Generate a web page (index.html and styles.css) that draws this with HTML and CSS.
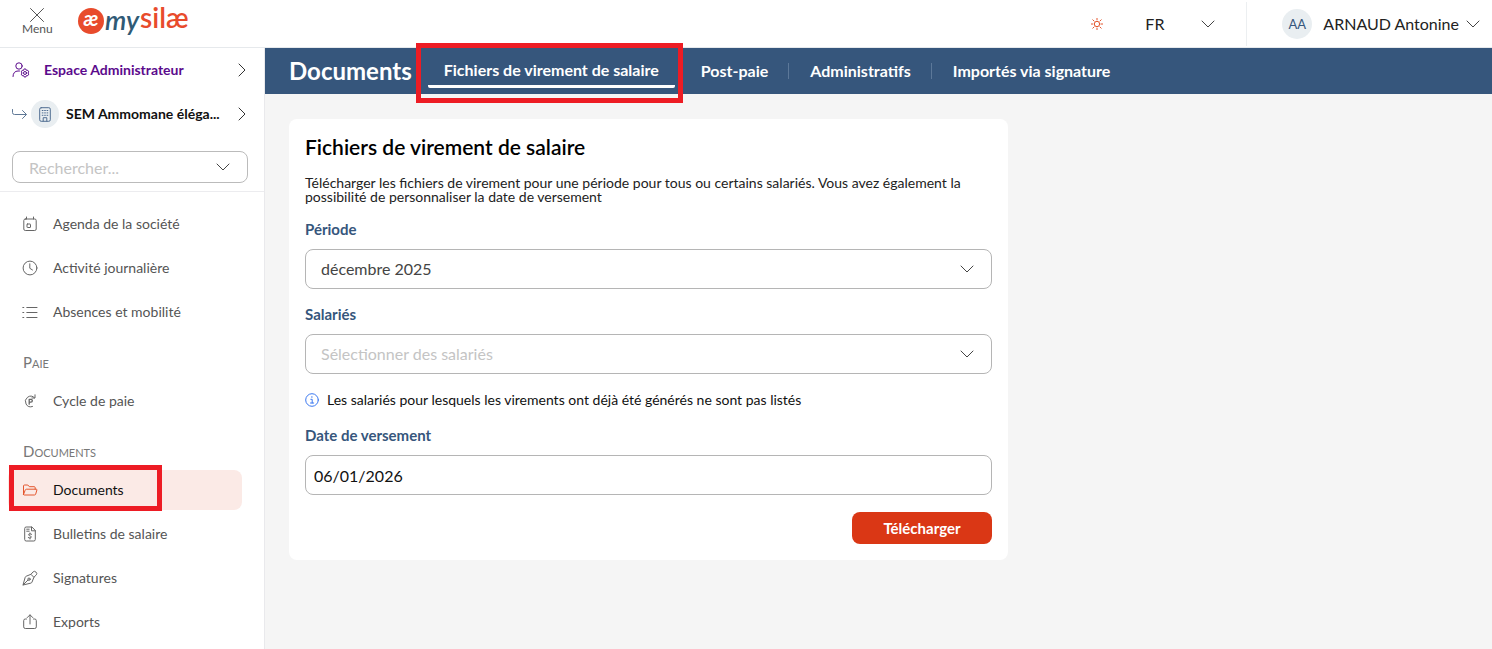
FILE: index.html
```html
<!DOCTYPE html>
<html lang="fr">
<head>
<meta charset="utf-8">
<meta name="viewport" content="width=device-width, initial-scale=1">
<title>Documents - mysilae</title>
<link rel="stylesheet" href="styles.css">
</head>
<body>
<div class="app">
  <header class="topbar">
    <button class="menu-button" type="button">
      <svg class="menu-icon" viewBox="0 0 16 14" aria-hidden="true"><path d="M1.5 .5l13 13M14.500 .5l-13 13"/></svg>
      <span>Menu</span>
    </button>
    <a class="logo" href="#" aria-label="mysilae">
      <svg viewBox="0 0 112 34" aria-hidden="true">
        <circle cx="13" cy="14" r="13" class="logo-disc"/>
        <text x="13" y="19" text-anchor="middle" class="logo-mark">æ</text>
        <text x="27" y="23" class="logo-my">my</text>
        <text x="62" y="21" class="logo-silae">silæ</text>
      </svg>
    </a>
    <div class="top-actions">
      <button class="theme-button" type="button" aria-label="Thème clair">
        <svg viewBox="0 0 12 12" aria-hidden="true"><circle cx="6" cy="6" r="2.700"/><path d="M6 0v1.900M6 10.100V12M0 6h1.900M10.100 6H12M1.800 1.800l1.300 1.300M8.900 8.900l1.300 1.300M10.200 1.800L8.900 3.100M3.100 8.900l-1.300 1.300"/></svg>
      </button>
      <div class="lang">
        <select class="lang-select" aria-label="Langue"><option>FR</option></select>
        <svg class="chevron" viewBox="0 0 14 8" aria-hidden="true"><path d="M1 1l6 6 6-6"/></svg>
      </div>
      <button class="user" type="button">
        <span class="avatar">AA</span>
        <span>ARNAUD Antonine</span>
        <svg class="chevron" viewBox="0 0 14 8" aria-hidden="true"><path d="M1 1l6 6 6-6"/></svg>
      </button>
    </div>
  </header>

  <aside class="sidebar">
    <div class="context">
      <a class="context-row admin" href="#">
        <svg class="admin-icon" viewBox="0 0 18 16" aria-hidden="true"><circle cx="7" cy="4" r="3.200"/><path d="M1 14.500c0-3.500 2-5.500 5-5.500h1.500"/><path d="M13 7l1 .2.500 1.200 1.300-.1.900 1.500-.7 1.200.7 1.200-.9 1.500-1.300-.1-.5 1.200-1 .2-1-.2-.5-1.200-1.300.1-.9-1.500.7-1.200-.7-1.200.9-1.500 1.300.1.500-1.200z"/><circle cx="13" cy="11" r="1.500"/></svg>
        <span class="context-name">Espace Administrateur</span>
        <svg class="chevron-right" viewBox="0 0 8 14" aria-hidden="true"><path d="M1 1l6 6-6 6"/></svg>
      </a>
      <a class="context-row company" href="#">
        <svg class="sub-arrow" viewBox="0 0 15 10" aria-hidden="true"><path d="M.5.5v3q0 2 2 2h11.500M10.500 1.500l4 4-4 4"/></svg>
        <span class="company-badge">
          <svg viewBox="0 0 12 15" aria-hidden="true"><rect x=".7" y=".7" width="10.600" height="13.600" rx="1.500"/><path d="M4.200 14v-3.300h3.600V14"/><path class="dots" d="M3.200 3.500h.8M5.600 3.500h.8M8 3.500h.8M3.200 5.900h.8M5.600 5.900h.8M8 5.900h.8M3.200 8.300h.8M5.600 8.300h.8M8 8.300h.8"/></svg>
        </span>
        <span class="context-name">SEM Ammomane éléga...</span>
        <svg class="chevron-right" viewBox="0 0 8 14" aria-hidden="true"><path d="M1 1l6 6-6 6"/></svg>
      </a>
      <div class="search">
        <input class="search-input" type="text" placeholder="Rechercher..." aria-label="Rechercher">
        <svg class="chevron" viewBox="0 0 14 8" aria-hidden="true"><path d="M1 1l6 6 6-6"/></svg>
      </div>
    </div>
    <nav class="side-nav" aria-label="Navigation principale">
      <a class="nav-item" href="#">
        <svg viewBox="0 0 16 16" aria-hidden="true"><rect x="1.800" y="3" width="12.400" height="11.500" rx="1.500"/><path d="M4.500 1v2M11.500 1v2"/><rect x="5" y="8" width="3.500" height="3.500" rx=".5"/></svg>
        <span>Agenda de la société</span>
      </a>
      <a class="nav-item" href="#">
        <svg viewBox="0 0 16 16" aria-hidden="true"><circle cx="8" cy="8" r="6.900"/><path d="M7.800 3.800v4.500l2.700 1.700"/></svg>
        <span>Activité journalière</span>
      </a>
      <a class="nav-item" href="#">
        <svg viewBox="0 0 16 16" aria-hidden="true"><path d="M4.800 3.500H15M4.800 8.500H15M4.800 13.500H15M.8 3.500h1M.8 8.500h1M.8 13.500h1"/></svg>
        <span>Absences et mobilité</span>
      </a>
      <h2 class="nav-title">Paie</h2>
      <a class="nav-item" href="#">
        <svg viewBox="0 0 16 16" aria-hidden="true"><path d="M12.500 4.800A5.300 5.300 0 1 0 10.500 13.500M13 1.800v3.200H9.800"/><path d="M7.200 11.200V6.300h1.700a1.400 1.400 0 0 1 0 2.900H7.200" stroke-width="1.300"/></svg>
        <span>Cycle de paie</span>
      </a>
      <h2 class="nav-title">Documents</h2>
      <a class="nav-item active" href="#" aria-current="page">
        <svg viewBox="0 0 16 16" aria-hidden="true"><path d="M1.500 12.500V4q0-1 1-1h3.300l1.500 1.700h4.900q1 0 1 1v1.500M1.500 12.500l1.700-4.400q.4-.9 1.300-.9h9.800q.8 0 .6.800l-1.200 4.100q-.3.900-1.200.9H2.300q-.8 0-.8-.5z"/></svg>
        <span>Documents</span>
      </a>
      <a class="nav-item" href="#">
        <svg viewBox="0 0 16 16" aria-hidden="true"><path d="M9.500 1H4.200Q2.700 1 2.700 2.500v11Q2.700 15 4.200 15h7.600q1.500 0 1.500-1.500V4.800zM9.500 1v3.800h3.800M4.700 3.200h2.500M4.700 5.200h2.500"/><path d="M9.600 8.300Q8 7.500 6.900 8.100q-.8.900.3 1.500l1.500.5q1.200.8.100 1.700-1 .5-2.500-.2M8 7v.9M8 12v1"/></svg>
        <span>Bulletins de salaire</span>
      </a>
      <a class="nav-item" href="#">
        <svg viewBox="0 0 16 16" aria-hidden="true"><path d="M1 15L3.200 7.300Q3.500 6.500 4.300 6.200L8.900 4.300l3 3-1.900 4.800q-.3.800-1.100 1L1 15l5-5M8.900 4.300l2.300-2.500q1.200-1.100 2.700.2 1.600 1.600.5 2.800l-2.500 2.500"/><circle cx="7" cy="9.200" r="1.200"/></svg>
        <span>Signatures</span>
      </a>
      <a class="nav-item" href="#">
        <svg viewBox="0 0 16 16" aria-hidden="true"><path d="M4.500 5H3.300Q1.700 5 1.700 6.600v6.300q0 1.600 1.600 1.600h9.400q1.600 0 1.600-1.600V6.600Q14.300 5 12.700 5h-1.200M8 10V1M5.200 3.600L8 .8l2.800 2.800"/></svg>
        <span>Exports</span>
      </a>
      <span class="highlight highlight-side"></span>
    </nav>
  </aside>

  <main class="content">
    <div class="page-bar">
      <h1 class="page-title">Documents</h1>
      <nav class="tabs" aria-label="Rubriques">
        <a class="tab current" href="#" aria-current="page"><span>Fichiers de virement de salaire</span></a>
        <a class="tab" href="#"><span>Post-paie</span></a>
        <a class="tab" href="#"><span>Administratifs</span></a>
        <a class="tab" href="#"><span>Importés via signature</span></a>
        <span class="highlight highlight-tab"></span>
      </nav>
    </div>
    <form class="card">
      <h2 class="card-title">Fichiers de virement de salaire</h2>
      <p class="card-text">Télécharger les fichiers de virement pour une période pour tous ou certains salariés. Vous avez également la possibilité de personnaliser la date de versement</p>
      <label class="label" for="periode">Période</label>
      <div class="select-box">
        <select class="field" id="periode"><option>décembre 2025</option></select>
        <svg class="chevron" viewBox="0 0 14 8" aria-hidden="true"><path d="M1 1l6 6 6-6"/></svg>
      </div>
      <label class="label" for="salaries">Salariés</label>
      <div class="select-box">
        <select class="field empty" id="salaries"><option>Sélectionner des salariés</option></select>
        <svg class="chevron" viewBox="0 0 14 8" aria-hidden="true"><path d="M1 1l6 6 6-6"/></svg>
      </div>
      <p class="info">
        <svg viewBox="0 0 14 14" aria-hidden="true"><circle cx="7" cy="7" r="6.300"/><path d="M5.800 6.300H7.200V10M5.500 10h3.200M6.900 3.600v.8"/></svg>
        <span>Les salariés pour lesquels les virements ont déjà été générés ne sont pas listés</span>
      </p>
      <label class="label" for="versement">Date de versement</label>
      <input class="field date" id="versement" type="text" value="06/01/2026">
      <button class="submit" type="submit">Télécharger</button>
    </form>
  </main>
</div>
</body>
</html>
```
FILE: styles.css
```css
* {
  box-sizing: border-box;
}

body {
  margin: 0;
  background: #f5f5f5;
  color: #222;
  font: 14px/20px Lato, "Open Sans", sans-serif;
}

h1, h2, p {
  margin: 0;
}

a {
  color: inherit;
  text-decoration: none;
}

button, input, select {
  margin: 0;
  padding: 0;
  border: 0;
  background: none;
  color: inherit;
  font: inherit;
}

button, select {
  cursor: pointer;
}

select {
  appearance: none;
}

svg {
  flex: none;
  fill: none;
  stroke: currentColor;
  stroke-linecap: round;
  stroke-linejoin: round;
}

.app {
  display: grid;
  grid-template-columns: 265px minmax(0, 1fr);
  grid-template-rows: auto 1fr;
  height: 100vh;
  overflow: hidden;
}

/* Top bar */
.topbar {
  grid-column: 1 / -1;
  display: flex;
  align-items: center;
  height: 48px;
  padding-left: 22px;
  border-bottom: 1px solid #e6e9ec;
  background: #fff;
}

.menu-button {
  display: flex;
  flex-direction: column;
  align-items: center;
  padding-bottom: 3px;
  color: #555;
  font-size: 12px;
  line-height: 14px;
}

.menu-icon {
  width: 16px;
  height: 14px;
}

.logo {
  margin-left: 25px;
}

.logo svg {
  display: block;
  width: 112px;
  height: 34px;
  overflow: visible;
  stroke: none;
}

.logo-disc {
  fill: #e84b2c;
}

.logo-mark {
  fill: #fff;
  font-size: 20px;
  font-style: italic;
  font-weight: 700;
}

.logo-my {
  fill: #2f5a76;
  font-size: 27px;
  font-style: italic;
  font-weight: 600;
}

.logo-silae {
  fill: #e84b2c;
  font-size: 28px;
  font-weight: 600;
}

.top-actions {
  display: flex;
  align-items: center;
  margin-left: auto;
}

.theme-button {
  display: flex;
  color: #e4572e;
}

.theme-button svg {
  width: 12px;
  height: 12px;
}

.chevron {
  width: 14px;
  height: 8px;
  color: #444;
}

.lang, .select-box, .search {
  position: relative;
  display: flex;
  align-items: center;
}

.lang {
  margin: 0 31px 0 42px;
}

.lang-select {
  width: 70px;
  font-size: 16px;
}

.lang .chevron {
  position: absolute;
  right: 0;
  pointer-events: none;
}

.user {
  display: flex;
  align-items: center;
  gap: 7px;
  height: 44px;
  padding: 0 12px 0 35px;
  border-left: 1px solid #eceff1;
  font-size: 16px;
}

.avatar {
  display: grid;
  place-items: center;
  width: 30px;
  height: 30px;
  margin-right: 4px;
  border-radius: 50%;
  background: #e9eef1;
  color: #36567c;
  font-size: 13px;
}

/* Sidebar */
.sidebar {
  border-right: 1px solid #e9e9ec;
  background: #fff;
}

.context {
  padding: 0 16px 8px 12px;
  border-bottom: 1px solid #ececef;
}

.context-row {
  display: flex;
  align-items: center;
  height: 44px;
  padding-right: 2px;
  font-weight: 700;
}

.context-name {
  flex: 1;
  white-space: nowrap;
}

.admin {
  gap: 14px;
  color: #5b0a8c;
}

.admin-icon {
  width: 18px;
  height: 16px;
}

.company {
  color: #111;
}

.sub-arrow {
  width: 15px;
  height: 10px;
  margin-right: 4px;
  color: #5f7896;
}

.company-badge {
  display: grid;
  place-items: center;
  width: 28px;
  height: 28px;
  margin-right: 7px;
  border-radius: 50%;
  background: #e9eef1;
  color: #4f6d92;
}

.company-badge svg {
  width: 12px;
  height: 15px;
}

.chevron-right {
  width: 8px;
  height: 14px;
  color: #333;
}

.search {
  margin-top: 15px;
}

.search-input {
  width: 100%;
  height: 32px;
  padding: 0 40px 0 16px;
  border: 1px solid #bbb;
  border-radius: 8px;
  font-size: 16px;
}

.search-input::placeholder {
  color: #c4c4c4;
}

.search .chevron {
  position: absolute;
  right: 18px;
}

.side-nav {
  position: relative;
  display: flex;
  flex-direction: column;
  gap: 4px;
  padding: 12px 22px 12px 8px;
}

.nav-item {
  display: flex;
  align-items: center;
  gap: 15px;
  height: 40px;
  padding: 0 14px;
  border-radius: 8px;
  color: #555;
}

.nav-item svg {
  width: 16px;
  height: 16px;
  color: #666;
}

.nav-item.active {
  background: #fbeae6;
  color: #111;
}

.nav-item.active svg {
  color: #e4572e;
}

.nav-title {
  height: 41px;
  padding: 16px 15px 0;
  color: #777;
  font-size: 15px;
  font-weight: 400;
  font-variant: small-caps;
}

/* Page header */
.content {
  min-width: 0;
}

.page-bar {
  display: flex;
  align-items: center;
  height: 46px;
  padding-left: 24px;
  background: #36567c;
  color: #fff;
}

.page-title {
  font-size: 24px;
  line-height: 28px;
}

.tabs {
  position: relative;
  display: flex;
  align-items: center;
  height: 46px;
  margin-left: 16px;
  font-size: 16px;
  font-weight: 700;
  white-space: nowrap;
}

.tab {
  display: flex;
  align-items: center;
}

.tab + .tab {
  padding-left: 21px;
}

.tab span {
  padding-right: 20px;
}

.tab + .tab:not(:nth-last-child(2)) span {
  border-right: 1px solid #5c7899;
  line-height: 16px;
}

.tab.current {
  margin-right: 5px;
}

.tab.current span {
  padding: 5px 16px;
  border-bottom: 3px solid #fff;
  border-radius: 2px;
}

/* Form card */
.card {
  display: flex;
  flex-direction: column;
  max-width: 719px;
  margin: 25px 24px;
  padding: 16px;
  border-radius: 8px;
  background: #fff;
}

.card-title {
  color: #000;
  font-size: 21px;
  font-weight: 600;
  line-height: 24px;
}

.card-text {
  margin-top: 17px;
  line-height: 14px;
}

.label {
  margin: 17px 0 12px;
  color: #36567c;
  font-size: 15px;
  font-weight: 700;
  line-height: 16px;
}

.field {
  width: 100%;
  height: 40px;
  padding: 0 15px;
  border: 1px solid #b5b5b5;
  border-radius: 8px;
  color: #444;
  font-size: 16px;
}

.field.empty {
  color: #c4c4c4;
}

.field.date {
  padding: 0 8px;
  color: #111;
}

.select-box .chevron {
  position: absolute;
  right: 18px;
  pointer-events: none;
}

.info {
  display: flex;
  align-items: center;
  gap: 8px;
  margin-top: 16px;
  color: #111;
}

.info svg {
  width: 14px;
  height: 14px;
  color: #3b78f0;
}

.submit {
  align-self: flex-end;
  width: 140px;
  height: 32px;
  margin-top: 17px;
  border-radius: 8px;
  background: #da3715;
  color: #fff;
  font-size: 15px;
  font-weight: 700;
}

/* Callout frames */
.highlight {
  position: absolute;
  border: 5px solid #ed1c24;
  pointer-events: none;
}

.highlight-side {
  left: 9px;
  top: 273px;
  width: 153px;
  height: 46px;
}

.highlight-tab {
  left: -12px;
  top: -5px;
  width: 267px;
  height: 60px;
}
```
